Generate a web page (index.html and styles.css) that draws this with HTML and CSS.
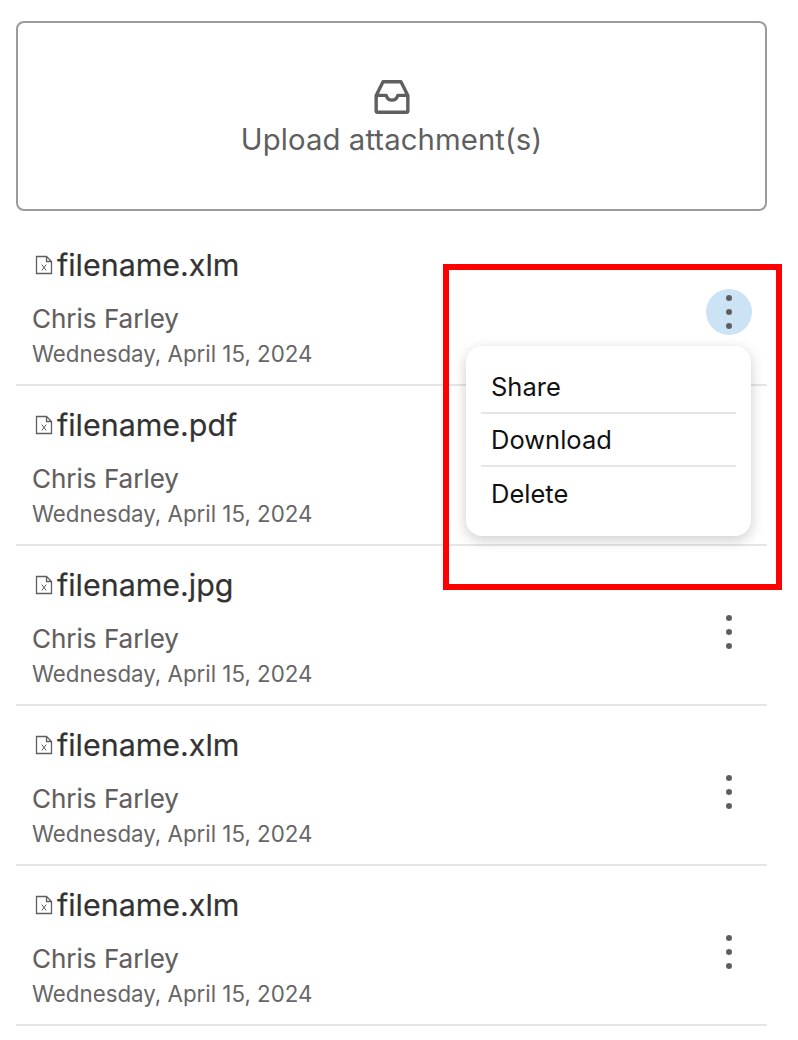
FILE: index.html
```html
<!DOCTYPE html>
<html lang="en">
<head>
<meta charset="utf-8">
<title>Attachments</title>
<link rel="stylesheet" href="styles.css">
</head>
<body>
<main class="page">
  <button class="upload" type="button">
    <svg class="upload-icon" viewBox="0 0 36 36" width="38" height="38" aria-hidden="true"><path d="M9.500 3.500h17L33 16.500V31a1.500 1.500 0 0 1-1.500 1.500h-27A1.500 1.500 0 0 1 3 31V16.500z M3 16.500h9.500c1 3 3 4.500 5.500 4.500s4.500-1.500 5.500-4.500H33" fill="none" stroke="currentColor" stroke-width="3.200" stroke-linejoin="round" stroke-linecap="round"/></svg>
    <span class="upload-label">Upload attachment(s)</span>
  </button>
  <ul class="list">
    <li class="row">
      <div class="info">
        <div class="name"><svg class="file-icon" viewBox="0 0 18 20" width="18" height="20" aria-hidden="true"><path d="M1.500 1.500h10l5 5v12h-15z M11.500 1.500v5h5" fill="none" stroke="currentColor" stroke-width="1.300"/><path d="M6.800 9.500l4.400 6 M11.200 9.500l-4.400 6" fill="none" stroke="currentColor" stroke-width="1"/></svg>filename.xlm</div>
        <div class="author">Chris Farley</div>
        <div class="date">Wednesday, April 15, 2024</div>
      </div>
      <button class="more active" type="button" aria-label="More"><i></i><i></i><i></i></button>
      <div class="menu">
        <div class="menu-item">Share</div>
        <div class="menu-item">Download</div>
        <div class="menu-item">Delete</div>
      </div>
    </li>
    <li class="row">
      <div class="info">
        <div class="name"><svg class="file-icon" viewBox="0 0 18 20" width="18" height="20" aria-hidden="true"><path d="M1.500 1.500h10l5 5v12h-15z M11.500 1.500v5h5" fill="none" stroke="currentColor" stroke-width="1.300"/><path d="M6.800 9.500l4.400 6 M11.200 9.500l-4.400 6" fill="none" stroke="currentColor" stroke-width="1"/></svg>filename.pdf</div>
        <div class="author">Chris Farley</div>
        <div class="date">Wednesday, April 15, 2024</div>
      </div>
    </li>
    <li class="row">
      <div class="info">
        <div class="name"><svg class="file-icon" viewBox="0 0 18 20" width="18" height="20" aria-hidden="true"><path d="M1.500 1.500h10l5 5v12h-15z M11.500 1.500v5h5" fill="none" stroke="currentColor" stroke-width="1.300"/><path d="M6.800 9.500l4.400 6 M11.200 9.500l-4.400 6" fill="none" stroke="currentColor" stroke-width="1"/></svg>filename.jpg</div>
        <div class="author">Chris Farley</div>
        <div class="date">Wednesday, April 15, 2024</div>
      </div>
      <button class="more" type="button" aria-label="More"><i></i><i></i><i></i></button>
    </li>
    <li class="row">
      <div class="info">
        <div class="name"><svg class="file-icon" viewBox="0 0 18 20" width="18" height="20" aria-hidden="true"><path d="M1.500 1.500h10l5 5v12h-15z M11.500 1.500v5h5" fill="none" stroke="currentColor" stroke-width="1.300"/><path d="M6.800 9.500l4.400 6 M11.200 9.500l-4.400 6" fill="none" stroke="currentColor" stroke-width="1"/></svg>filename.xlm</div>
        <div class="author">Chris Farley</div>
        <div class="date">Wednesday, April 15, 2024</div>
      </div>
      <button class="more" type="button" aria-label="More"><i></i><i></i><i></i></button>
    </li>
    <li class="row">
      <div class="info">
        <div class="name"><svg class="file-icon" viewBox="0 0 18 20" width="18" height="20" aria-hidden="true"><path d="M1.500 1.500h10l5 5v12h-15z M11.500 1.500v5h5" fill="none" stroke="currentColor" stroke-width="1.300"/><path d="M6.800 9.500l4.400 6 M11.200 9.500l-4.400 6" fill="none" stroke="currentColor" stroke-width="1"/></svg>filename.xlm</div>
        <div class="author">Chris Farley</div>
        <div class="date">Wednesday, April 15, 2024</div>
      </div>
      <button class="more" type="button" aria-label="More"><i></i><i></i><i></i></button>
    </li>
  </ul>
</main>
<div class="highlight"></div>
</body>
</html>
```
FILE: styles.css
```css
* { box-sizing: border-box; }
html, body { margin: 0; background: #fff; }
body { font-family: Inter, "Liberation Sans", sans-serif; position: relative; height: 1040px; overflow: hidden; }
.page { padding: 21px 31px 0 16px; }
.upload {
  width: 100%; height: 190px; display: flex; flex-direction: column; align-items: center; justify-content: flex-start;
  background: #fff; border: 2px solid #9b9b9b; border-radius: 8px; color: #5f5f5f; font: inherit; padding: 55px 0 0;
}
.upload-icon { display: block; margin-bottom: 6px; }
.upload-label { font-size: 29.3px; line-height: 36px; letter-spacing: .1px; }
.list { list-style: none; margin: 15px 0 0; padding: 0; }
.row { position: relative; height: 160px; border-bottom: 2px solid #e6e6e6; display: flex; justify-content: space-between; padding: 0 15px 0 16px; }
.info { padding-top: 17px; }
.name { display: flex; align-items: center; gap: 4px; font-size: 30.4px; line-height: 44px; color: #333; height: 44px; -webkit-text-stroke: .2px #333; }
.file-icon { color: #5f5f5f; margin-left: 3px; flex: none; }
.author { font-size: 26px; line-height: 36px; color: #5f5f5f; margin-top: 14px; -webkit-text-stroke: .15px #5f5f5f; }
.date { font-size: 22.3px; line-height: 30px; color: #666; margin-top: 2px; }
.more { width: 46px; height: 46px; margin-top: 63px; border: 0; border-radius: 50%; background: transparent; padding: 0; display: flex; flex-direction: column; align-items: center; justify-content: center; gap: 8px; flex: none; }
.more i { display: block; width: 6px; height: 6px; border-radius: 50%; background: #5f5f5f; margin: 0; }
.more.active { background: #cce3f5; }
.menu { position: absolute; left: 450px; top: 120px; width: 285px; height: 190px; background: #fff; border-radius: 16px; box-shadow: 0 4px 14px rgba(0,0,0,.2); padding: 15px 15px 0; z-index: 2; }
.menu-item { height: 53px; padding: 0 10px; display: flex; align-items: center; font-size: 25.5px; color: #111; border-bottom: 2px solid #e6e6e6; }
.menu-item:last-child { border-bottom: 0; }
.highlight { position: absolute; left: 443px; top: 264px; width: 339px; height: 326px; border: 6px solid #ff0000; z-index: 3; pointer-events: none; }
```
